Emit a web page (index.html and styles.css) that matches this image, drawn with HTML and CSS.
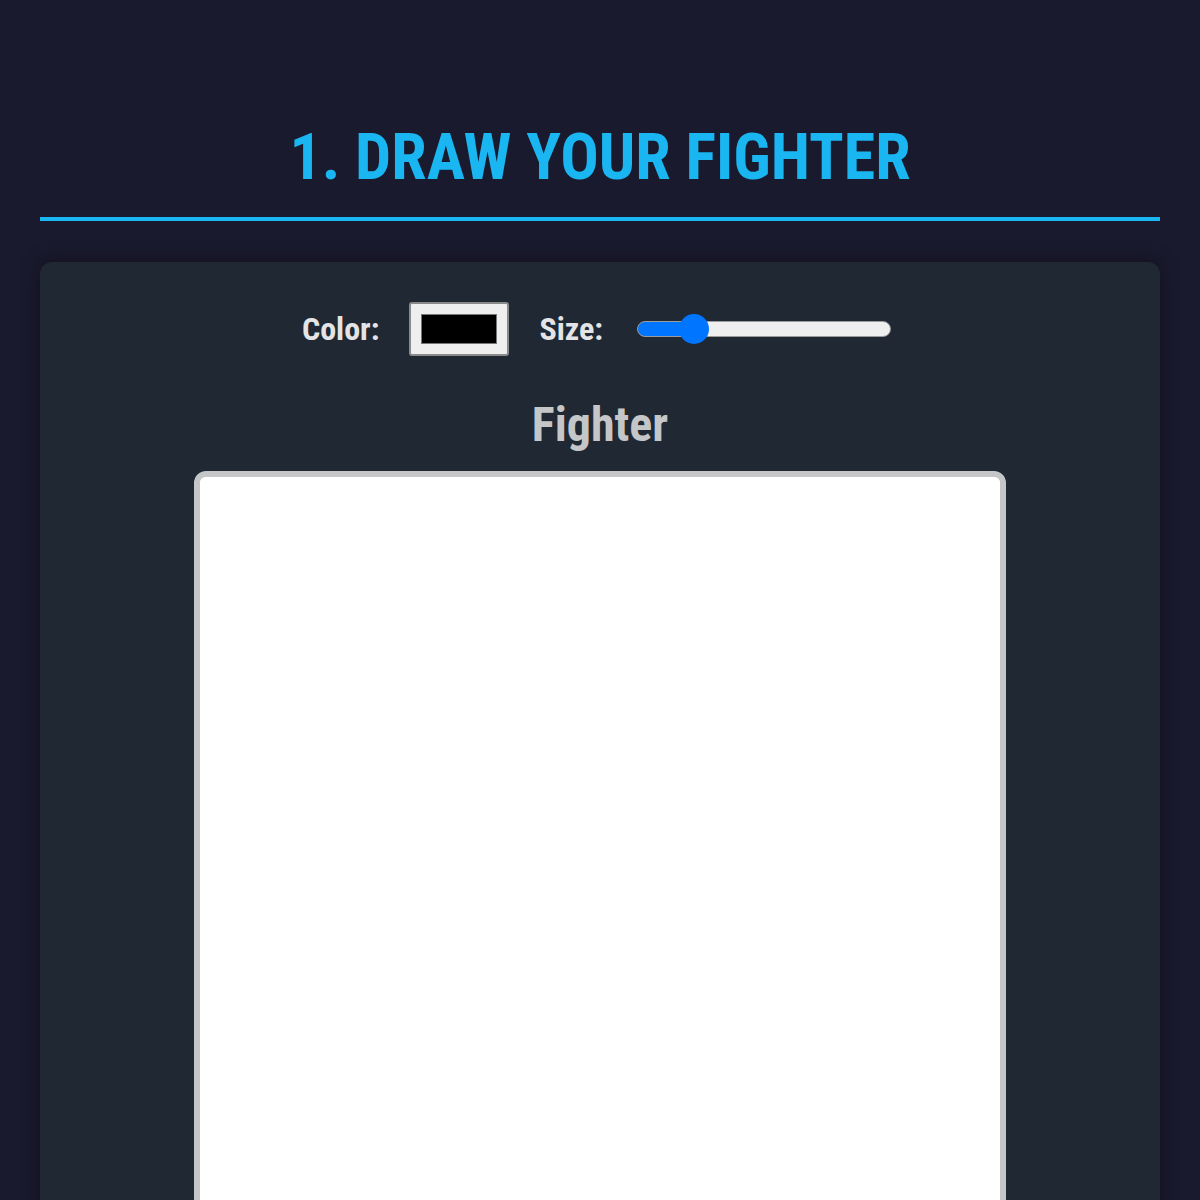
FILE: index.html
```html
<!DOCTYPE html>
<html lang="en">
<head>
  <meta charset="UTF-8">
  <meta name="viewport" content="width=device-width, initial-scale=1.0">
  <title>Fighter Builder</title>
  <link rel="stylesheet" href="styles.css">
</head>
<body>
  <main class="page">
    <h1 class="step-title">1. Draw Your Fighter</h1>
    <section class="draw-panel">
      <div class="tools">
        <label for="penColor">Color:</label>
        <input type="color" id="penColor" value="#000000">
        <label for="penSize">Size:</label>
        <input type="range" id="penSize" min="1" max="50" value="10">
      </div>
      <h2 class="canvas-title">Fighter</h2>
      <canvas id="fighterCanvas" width="800" height="1000"></canvas>
    </section>
  </main>
  <script>
    const canvas = document.getElementById('fighterCanvas');
    const ctx = canvas.getContext('2d');
    const penColor = document.getElementById('penColor');
    const penSize = document.getElementById('penSize');
    let drawing = false;
    ctx.fillStyle = '#ffffff';
    ctx.fillRect(0, 0, canvas.width, canvas.height);
    // keep the blue part of the slider track under the thumb
    function updateFill() {
      const pct = (penSize.value - penSize.min) / (penSize.max - penSize.min);
      penSize.style.setProperty('--fill', (15 + pct * 224) + 'px');
    }
    function point(e) {
      const r = canvas.getBoundingClientRect();
      return { x: e.clientX - r.left - 6, y: e.clientY - r.top - 6 };
    }
    canvas.addEventListener('mousedown', e => {
      drawing = true;
      const p = point(e);
      ctx.beginPath();
      ctx.moveTo(p.x, p.y);
    });
    canvas.addEventListener('mousemove', e => {
      if (!drawing) return;
      const p = point(e);
      ctx.lineWidth = penSize.value;
      ctx.lineCap = 'round';
      ctx.strokeStyle = penColor.value;
      ctx.lineTo(p.x, p.y);
      ctx.stroke();
    });
    window.addEventListener('mouseup', () => { drawing = false; });
    penSize.addEventListener('input', updateFill);
    updateFill();
  </script>
</body>
</html>
```

FILE: styles.css
```css
body {
  margin: 0;
  background-color: #1a1a2e;
  color: #c5c6c7;
  font-family: 'Roboto Condensed', 'Roboto', sans-serif;
  font-stretch: condensed;
}
.page {
  max-width: 1120px;
  margin: 0 auto;
  padding: 40px 40px;
}
.step-title {
  margin: 83px 0 41px;
  padding-bottom: 24px;
  border-bottom: 4px solid #1ab6f2;
  color: #1ab6f2;
  font-size: 64px;
  font-weight: 700;
  text-align: center;
  text-transform: uppercase;
  line-height: 1.1;
}
.draw-panel {
  background: #1f2833;
  border-radius: 12px;
  padding: 40px 20px;
  box-shadow: 0 0 20px rgba(0, 0, 0, 0.4);
  display: flex;
  flex-direction: column;
  align-items: center;
}
.tools {
  display: flex;
  align-items: center;
  gap: 30px;
  font-size: 32px;
  font-weight: 700;
  color: #e4e4e6;
}
.tools input[type="color"] {
  width: 100px;
  height: 54px;
  padding: 6px 8px;
  border: 2px solid #8a8a8a;
  border-radius: 3px;
  background: #efefef;
  margin: 0;
}
.tools input[type="range"] {
  -webkit-appearance: none;
  appearance: none;
  width: 254px;
  height: 30px;
  margin: 0 7px 0 4px;
  background: transparent;
  --fill: 55px;
}
.tools input[type="range"]::-webkit-slider-runnable-track {
  height: 16px;
  box-sizing: border-box;
  border: 1px solid #9c9c9c;
  border-radius: 8px;
  background: linear-gradient(to right, #0075ff var(--fill), #efefef var(--fill));
}
.tools input[type="range"]::-webkit-slider-thumb {
  -webkit-appearance: none;
  width: 30px;
  height: 30px;
  margin-top: -8px;
  border: none;
  border-radius: 50%;
  background: #0075ff;
}
.canvas-title {
  margin: 43px 0 19px;
  font-size: 48px;
  font-weight: 700;
  line-height: 1.1;
}
#fighterCanvas {
  border: 6px solid #c5c6c7;
  border-radius: 12px;
  background: #ffffff;
}
```
